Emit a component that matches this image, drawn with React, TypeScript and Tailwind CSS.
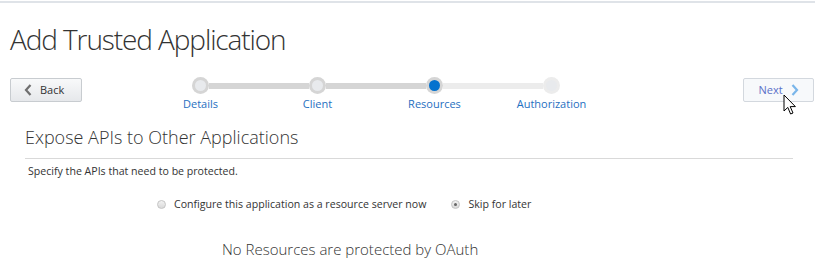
import React from "react";

type Step = {
  label: string;
  state: "done" | "active" | "todo";
};

const steps: Step[] = [
  { label: "Details", state: "done" },
  { label: "Client", state: "done" },
  { label: "Resources", state: "active" },
  { label: "Authorization", state: "todo" },
];

function Stepper() {
  return (
    <div className="flex">
      {steps.map((step, i) => {
        const leftBar = i === 0 ? "bg-transparent" : step.state === "todo" ? "bg-[#ececec]" : "bg-[#d5d5d5]";
        const rightBar =
          i === steps.length - 1
            ? "bg-transparent"
            : steps[i + 1].state === "todo"
              ? "bg-[#ececec]"
              : "bg-[#d5d5d5]";
        return (
          <div key={step.label} className="flex w-[117px] flex-col items-center">
            <div className="flex w-full items-center">
              <div className={`h-[6px] flex-1 ${leftBar}`} />
              <div
                className={`flex size-[17px] items-center justify-center rounded-full ${
                  step.state === "todo" ? "bg-[#ececec]" : "bg-[#d5d5d5]"
                }`}
              >
                <div
                  className={`size-[11px] rounded-full ${
                    step.state === "active" ? "bg-[#0572ce]" : "bg-[#e8eaed]"
                  }`}
                />
              </div>
              <div className={`h-[6px] flex-1 ${rightBar}`} />
            </div>
            <span className="mt-[3px] text-[11px] leading-[14px] text-[#1f6fbf]">{step.label}</span>
          </div>
        );
      })}
    </div>
  );
}

function Radio({ checked, label }: { checked?: boolean; label: string }) {
  return (
    <label className="flex items-center gap-[8px]">
      <span className="flex size-[9px] items-center justify-center rounded-full border border-[#c4c4c4] bg-gradient-to-b from-[#f2f2f2] to-[#d9d9d9]">
        {checked && <span className="size-[3px] rounded-full bg-[#666]" />}
      </span>
      <span>{label}</span>
    </label>
  );
}

function Cursor() {
  return (
    <svg width="14" height="22" viewBox="0 0 14 22" className="pointer-events-none absolute left-[40px] top-[16px]">
      <path
        d="M1 1 L1 17 L4.8 13.4 L7.6 20 L10 19 L7.2 12.6 L12.4 12.6 Z"
        fill="#fff"
        stroke="#000"
        strokeWidth="1"
        strokeLinejoin="round"
      />
    </svg>
  );
}

export default function App() {
  return (
    <div className="h-[269px] w-[815px] overflow-hidden bg-white font-['Open_Sans',sans-serif] text-[#333]">
      <div className="mt-[1px] h-[2px] bg-[#dfe3e8]" />
      <h1 className="ml-[10px] mt-[16px] text-[28px] font-light leading-[40px] tracking-[-1.1px] text-[#333]">
        Add Trusted Application
      </h1>

      <div className="mt-[15px] flex items-start">
        <button className="ml-[10px] mt-[4px] flex h-[24px] w-[72px] items-center gap-[8px] rounded-[2px] border border-[#c8ccd0] bg-gradient-to-b from-[#f8f9fa] to-[#e6e8eb] pl-[13px] text-[11px] text-[#333]">
          <svg width="8" height="12" viewBox="0 0 8 12">
            <path d="M6.5 1 L2 6 L6.5 11" fill="none" stroke="#6f6f6f" strokeWidth="2.2" />
          </svg>
          Back
        </button>

        <div className="ml-[60px] mt-[3px]">
          <Stepper />
        </div>

        <div className="relative ml-auto mr-[1px] mt-[4px]">
          <button className="flex h-[24px] w-[71px] items-center justify-center gap-[8px] rounded-[2px] border border-[#d3d8de] bg-[#f7f9fb] text-[11px] text-[#5a70c8]">
            Next
            <svg width="8" height="12" viewBox="0 0 8 12">
              <path d="M1.5 1 L6 6 L1.5 11" fill="none" stroke="#7ab6ea" strokeWidth="2.2" />
            </svg>
          </button>
          <Cursor />
        </div>
      </div>

      <div className="ml-[25px] mr-[22px] mt-[12px]">
        <h2 className="border-b border-[#d9d9d9] pb-[7px] text-[18px] font-light leading-[28px] text-[#333]">
          Expose APIs to Other Applications
        </h2>
        <p className="ml-[3px] mt-[5px] text-[10.6px] leading-[14px] text-[#333]">
          Specify the APIs that need to be protected.
        </p>
        <div className="mt-[18px] flex gap-[25px] pl-[132px] text-[10.6px] leading-[16px] text-[#333]">
          <Radio label="Configure this application as a resource server now" />
          <Radio checked label="Skip for later" />
        </div>
        <p className="mt-[26px] pl-[197px] text-[15px] font-light leading-[22px] text-[#333]">
          No Resources are protected by OAuth
        </p>
      </div>
    </div>
  );
}
